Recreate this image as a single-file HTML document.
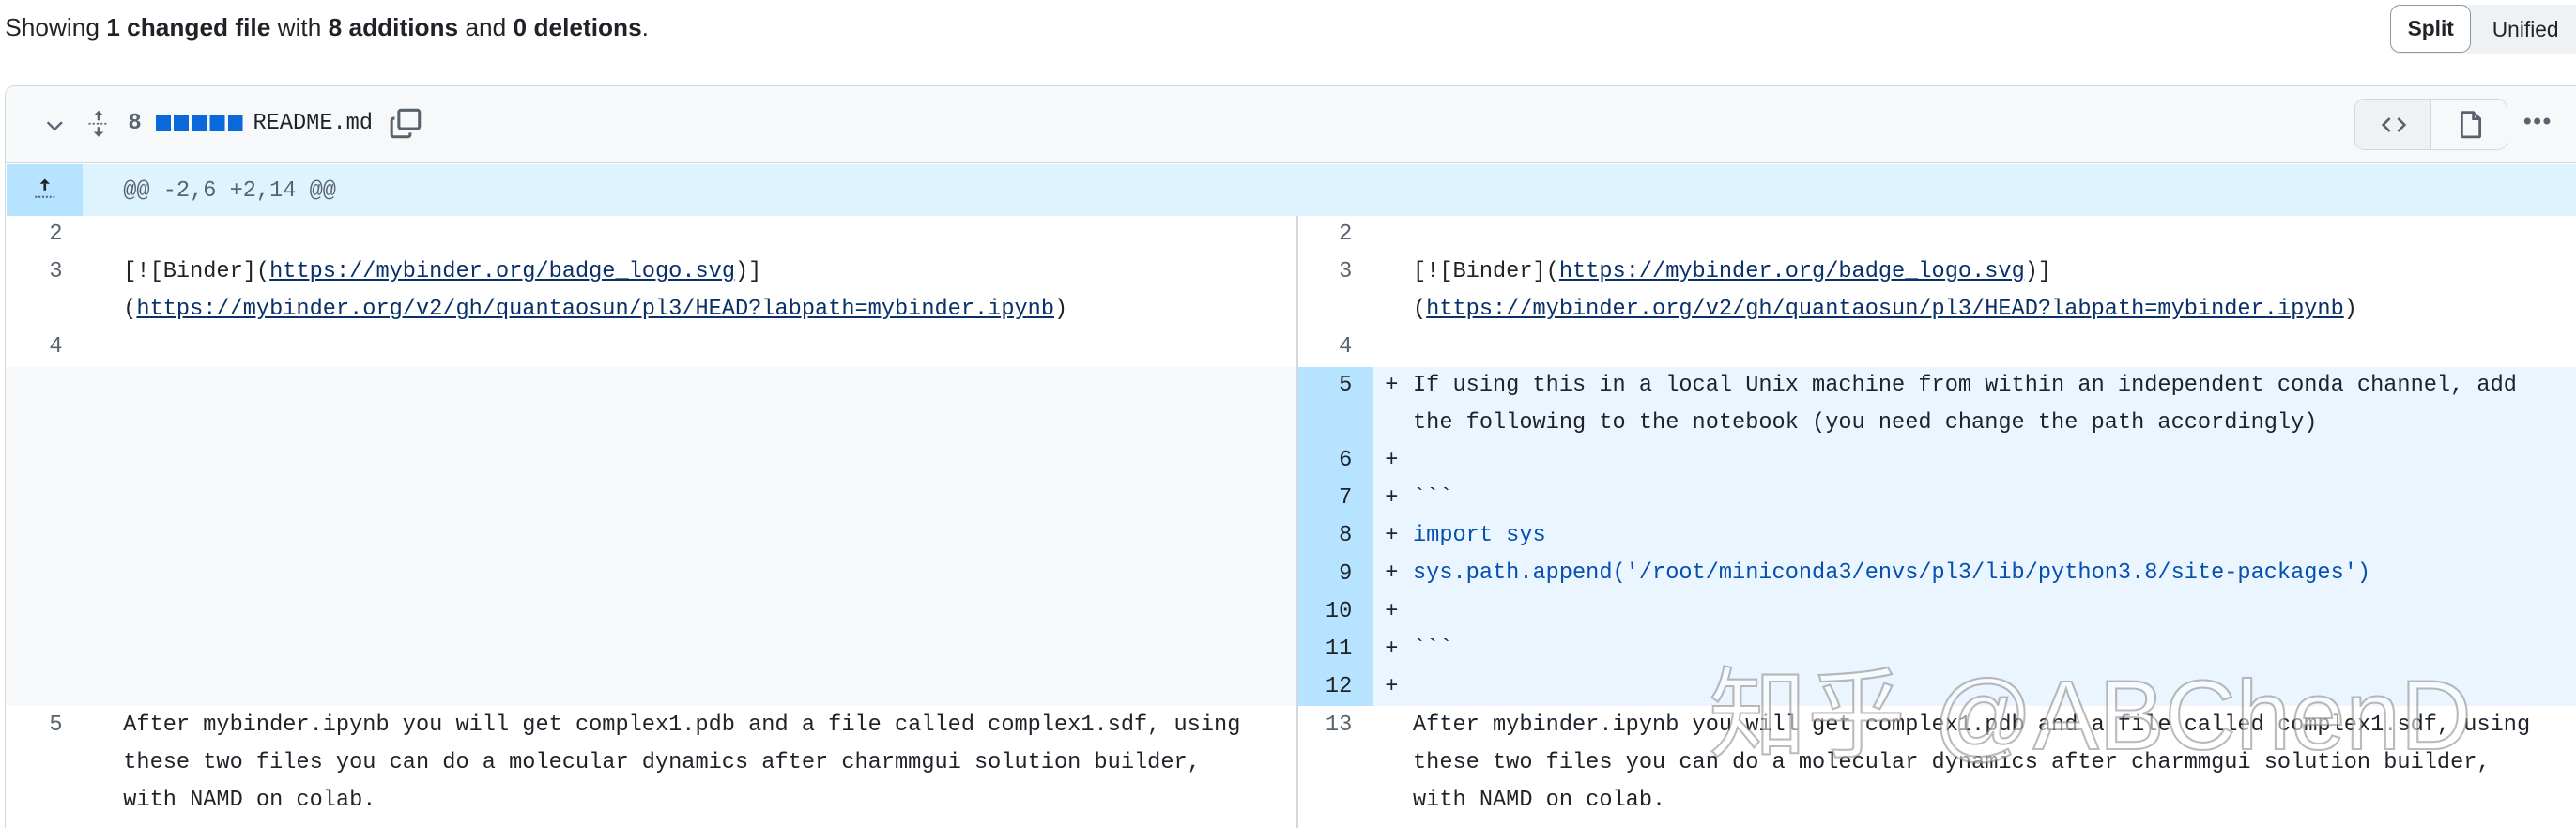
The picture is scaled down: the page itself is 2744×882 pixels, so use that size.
<!DOCTYPE html>
<html><head><meta charset="utf-8"><style>
html,body{margin:0;padding:0;background:#fff;width:2744px;height:882px;overflow:hidden}
#w{zoom:1.75;width:1568px;height:504px;position:relative;font-family:"Liberation Sans",sans-serif;color:#1f2328}
.a{position:absolute}
.mono{font-family:"Liberation Mono",monospace;font-size:13.5px;white-space:pre}
.num{position:absolute;text-align:right;color:#59636e;font-family:"Liberation Mono",monospace;font-size:13.5px}
.code{position:absolute;font-family:"Liberation Mono",monospace;font-size:13.5px;white-space:nowrap;color:#1f2328;line-height:22.9px}
.code div{height:22.9px}
a{color:#0a3069;text-decoration:underline}
.bl{color:#0550ae}
</style></head><body><div id="w">
<div class="a" style="left:3px;top:7px;font-size:15px;line-height:20px">Showing <b>1 changed file</b> with <b>8 additions</b> and <b>0 deletions</b>.</div>
<div class="a" style="left:1455px;top:3px;width:113px;height:30px;background:#eff2f5;border-radius:6px 0 0 6px"></div>
<div class="a" style="left:1455px;top:3px;width:48px;height:28px;border:1px solid #8c959f;border-radius:6px;background:#fff;font-size:13px;font-weight:bold;line-height:28px;text-align:center">Split</div>
<div class="a" style="left:1517px;top:3px;font-size:13px;line-height:30px">Unified</div>

<div class="a" style="left:3px;top:52px;width:1580px;height:460px;border:1px solid #d1d9e0;border-radius:6px;overflow:hidden">
 <div class="a" style="left:0;top:0;width:100%;height:46px;background:#f6f8fa;border-bottom:1px solid #d1d9e0"></div>
</div>
<svg class="a" style="left:26px;top:69px" width="14" height="14" viewBox="0 0 16 16"><path d="M3 6l5 5 5-5" fill="none" stroke="#59636e" stroke-width="1.5"/></svg>
<svg class="a" style="left:52px;top:66px" width="16" height="18" viewBox="0 0 16 18"><path d="M8 1l-3 3h6z M8 17l-3-3h6z" fill="#59636e"/><path d="M8 4v3 M8 11v3" stroke="#59636e" stroke-width="1.5"/><path d="M2 9h12" stroke="#59636e" stroke-width="1" stroke-dasharray="1.2 1.2"/></svg>
<div class="a mono" style="left:78px;top:66px;font-weight:bold;color:#59636e;line-height:18px">8</div>
<div class="a" style="left:95px;top:70px;width:53px;height:10px;background:repeating-linear-gradient(90deg,#0969da 0 9px,transparent 9px 11px)"></div>
<div class="a mono" style="left:154px;top:66px;line-height:18px">README.md</div>
<svg class="a" style="left:237px;top:65px" width="20" height="20" viewBox="0 0 16 16"><path d="M5.5 1.5h8a1 1 0 011 1v7a1 1 0 01-1 1h-8a1 1 0 01-1-1v-7a1 1 0 011-1z M2.5 5.5h-0.5a1 1 0 00-1 1v7a1 1 0 001 1h7a1 1 0 001-1v-1" fill="none" stroke="#59636e" stroke-width="1.4"/></svg>
<div class="a" style="left:1433px;top:60px;width:92px;height:30px;border:1px solid #d1d9e0;border-radius:6px;background:#f6f8fa;overflow:hidden"><div style="width:46px;height:30px;background:#eff2f5;border-right:1px solid #d1d9e0"></div></div>
<svg class="a" style="left:1449px;top:68px" width="16" height="16" viewBox="0 0 16 16"><path d="M5.5 4l-4 4 4 4 M10.5 4l4 4-4 4" fill="none" stroke="#59636e" stroke-width="1.5"/></svg>
<svg class="a" style="left:1496px;top:67px" width="16" height="18" viewBox="0 0 16 18"><path d="M3 1.5h6.5l4 4v10.5a0.5 0.5 0 01-.5.5h-10a0.5 0.5 0 01-.5-.5v-14a0.5 0.5 0 01.5-.5z M9.5 1.5v4h4" fill="none" stroke="#59636e" stroke-width="1.6"/></svg>
<div class="a" style="left:1536px;top:66px;font-size:14px;color:#59636e;letter-spacing:1px;font-weight:bold">•••</div>

<div class="a" style="left:4px;top:100px;width:1564px;height:31.5px;background:#ddf4ff"></div>
<div class="a" style="left:4px;top:100px;width:46px;height:31.5px;background:#b6e3ff"></div>
<svg class="a" style="left:18px;top:107px" width="18" height="16" viewBox="0 0 18 16"><path d="M9 2l-3 3h6z" fill="#1f2328"/><path d="M9 5v4" stroke="#1f2328" stroke-width="1.5"/><path d="M3 13h12" stroke="#59636e" stroke-width="1.2" stroke-dasharray="1.2 1"/></svg>
<div class="a mono" style="left:75px;top:106px;line-height:20px;color:#59636e">@@ -2,6 +2,14 @@</div>

<div class="a" style="left:4px;top:223.5px;width:785px;height:206px;background:#f6f8fa"></div>
<div class="a" style="left:789px;top:131.5px;width:1px;height:380px;background:#d1d9e0"></div>
<div class="a" style="left:790px;top:223.5px;width:778px;height:206px;background:#eaf5ff"></div>
<div class="a" style="left:790px;top:223.5px;width:46px;height:206px;background:#b6e3ff"></div>

<div class="num" style="left:4px;width:34px;top:131.5px;line-height:22.9px">2<br>3<br><br>4</div>
<div class="code" style="left:75px;top:154.4px"><div>[![Binder](<a>https://mybinder.org/badge_logo.svg</a>)]</div><div>(<a>https://mybinder.org/v2/gh/quantaosun/pl3/HEAD?labpath=mybinder.ipynb</a>)</div></div>
<div class="num" style="left:4px;width:34px;top:430px;line-height:22.9px">5</div>
<div class="code" style="left:75px;top:430px"><div>After mybinder.ipynb you will get complex1.pdb and a file called complex1.sdf, using</div><div>these two files you can do a molecular dynamics after charmmgui solution builder,</div><div>with NAMD on colab.</div></div>

<div class="num" style="left:790px;width:33px;top:131.5px;line-height:22.9px">2<br>3<br><br>4</div>
<div class="code" style="left:860px;top:154.4px"><div>[![Binder](<a>https://mybinder.org/badge_logo.svg</a>)]</div><div>(<a>https://mybinder.org/v2/gh/quantaosun/pl3/HEAD?labpath=mybinder.ipynb</a>)</div></div>
<div class="num" style="left:790px;width:33px;top:223.5px;line-height:22.9px;color:#1f2328">5<br><br>6<br>7<br>8<br>9<br>10<br>11<br>12</div>
<div class="code" style="left:843px;top:223.5px"><div>+</div><div></div><div>+</div><div>+</div><div>+</div><div>+</div><div>+</div><div>+</div><div>+</div></div>
<div class="code" style="left:860px;top:223.5px"><div>If using this in a local Unix machine from within an independent conda channel, add</div><div>the following to the notebook (you need change the path accordingly)</div><div></div><div>&#96;&#96;&#96;</div><div class="bl">import sys</div><div class="bl">sys.path.append('/root/miniconda3/envs/pl3/lib/python3.8/site-packages')</div><div></div><div>&#96;&#96;&#96;</div><div></div></div>
<div class="num" style="left:790px;width:33px;top:430px;line-height:22.9px">13</div>
<div class="code" style="left:860px;top:430px"><div>After mybinder.ipynb you will get complex1.pdb and a file called complex1.sdf, using</div><div>these two files you can do a molecular dynamics after charmmgui solution builder,</div><div>with NAMD on colab.</div></div>
<div class="a" style="left:1040px;top:400px;font-family:'Liberation Sans','Noto Sans CJK SC',sans-serif;font-size:60px;line-height:72px;color:rgba(255,255,255,0.55);-webkit-text-stroke:1.2px rgba(120,120,120,0.5);white-space:nowrap">知乎 @ABChenD</div>
</div></body></html>
